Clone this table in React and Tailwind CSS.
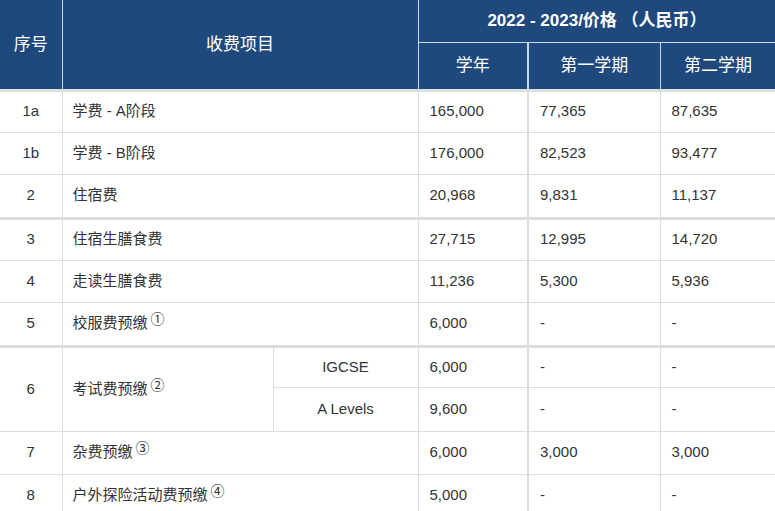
import React from "react";

const rows = [
  { no: "1a", name: "学费 - A阶段", year: "165,000", t1: "77,365", t2: "87,635", h: "h-[42px]" },
  { no: "1b", name: "学费 - B阶段", year: "176,000", t1: "82,523", t2: "93,477", h: "h-[42px]" },
  { no: "2", name: "住宿费", year: "20,968", t1: "9,831", t2: "11,137", h: "h-[44px]" },
  {
    no: "3",
    name: "住宿生膳食费",
    year: "27,715",
    t1: "12,995",
    t2: "14,720",
    h: "h-[42px] border-t-[3px] border-t-[#dddddd]",
  },
  { no: "4", name: "走读生膳食费", year: "11,236", t1: "5,300", t2: "5,936", h: "h-[42px]" },
  { no: "5", name: "校服费预缴", note: "①", year: "6,000", t1: "-", t2: "-", h: "h-[44px]" },
];

const td = "border border-[#dddddd] px-[11px] py-0 align-middle";

const Note = ({ n }) => (
  <sup className="ml-[3px] text-[14px] relative -top-[4px]">{n}</sup>
);

const App = () => {
  return (
    <div className="w-[775px] h-[511px] overflow-hidden bg-white">
      <table
        className="w-[776px] table-fixed border-collapse text-[15px] text-[#333333]"
        style={{ fontFamily: '"Liberation Sans", "Noto Sans CJK SC", sans-serif' }}
      >
        <colgroup>
          <col className="w-[62px]" />
          <col className="w-[211px]" />
          <col className="w-[145px]" />
          <col className="w-[110px]" />
          <col className="w-[132px]" />
          <col className="w-[116px]" />
        </colgroup>
        <thead className="bg-[#1f497d] text-white text-[17px]">
          <tr>
            <th
              rowSpan={2}
              className="border border-[#c9d6e8] border-l-0 border-t-0 font-normal"
            >
              序号
            </th>
            <th colSpan={2} rowSpan={2} className="border border-[#c9d6e8] border-t-0 font-normal">
              收费项目
            </th>
            <th colSpan={3} className="border border-[#c9d6e8] border-t-0 h-[42px] font-bold">
              2022 - 2023/价格 （人民币）
            </th>
          </tr>
          <tr className="border-b-[3px] border-b-[#dbe0e0]">
            <th className="border border-[#c9d6e8] border-r-2 h-[48px] font-normal">学年</th>
            <th className="border border-[#c9d6e8] font-normal">第一学期</th>
            <th className="border border-[#c9d6e8] font-normal">第二学期</th>
          </tr>
        </thead>
        <tbody>
          {rows.map((r) => (
            <tr key={r.no} className={r.h}>
              <td className={`${td} text-center border-l-0`}>{r.no}</td>
              <td colSpan={2} className={`${td} pl-[10px]`}>
                {r.name}
                {r.note && <Note n={r.note} />}
              </td>
              <td className={`${td} border-r-2`}>{r.year}</td>
              <td className={td}>{r.t1}</td>
              <td className={td}>{r.t2}</td>
            </tr>
          ))}
          <tr className="border-t-[3px] border-t-[#dddddd] h-[41px]">
            <td rowSpan={2} className={`${td} text-center border-l-0`}>6</td>
            <td rowSpan={2} className={`${td} pl-[10px]`}>
              考试费预缴
              <Note n="②" />
            </td>
            <td className={`${td} text-center`}>IGCSE</td>
            <td className={`${td} border-r-2`}>6,000</td>
            <td className={td}>-</td>
            <td className={td}>-</td>
          </tr>
          <tr className="h-[44px]">
            <td className={`${td} text-center`}>A Levels</td>
            <td className={`${td} border-r-2`}>9,600</td>
            <td className={td}>-</td>
            <td className={td}>-</td>
          </tr>
          <tr className="h-[43px]">
            <td className={`${td} text-center border-l-0`}>7</td>
            <td colSpan={2} className={`${td} pl-[10px]`}>
              杂费预缴
              <Note n="③" />
            </td>
            <td className={`${td} border-r-2`}>6,000</td>
            <td className={td}>3,000</td>
            <td className={td}>3,000</td>
          </tr>
          <tr className="h-[42px]">
            <td className={`${td} text-center border-l-0`}>8</td>
            <td colSpan={2} className={`${td} pl-[10px]`}>
              户外探险活动费预缴
              <Note n="④" />
            </td>
            <td className={`${td} border-r-2`}>5,000</td>
            <td className={td}>-</td>
            <td className={td}>-</td>
          </tr>
        </tbody>
      </table>
    </div>
  );
};

export default App;
